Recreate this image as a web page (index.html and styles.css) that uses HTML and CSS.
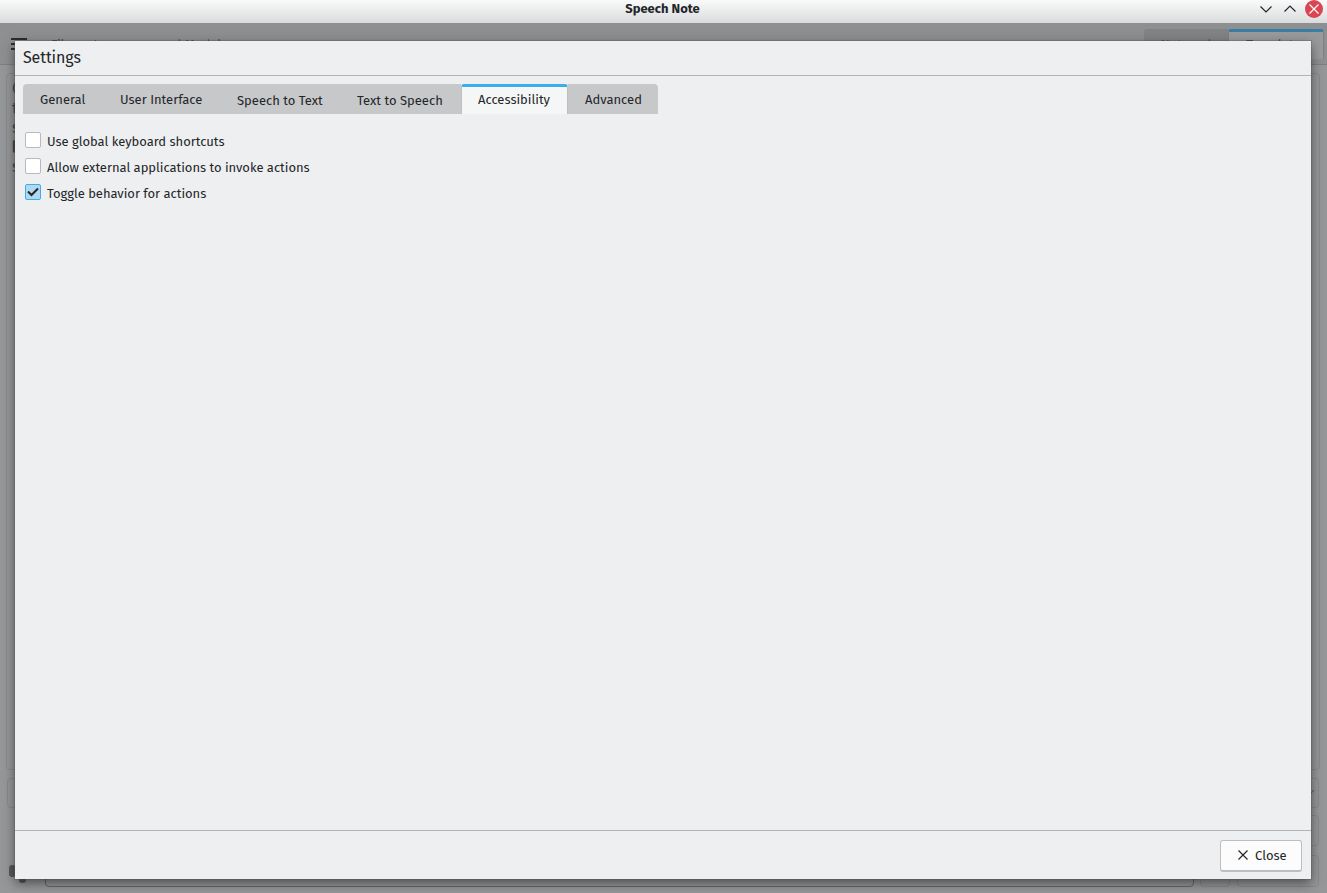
FILE: index.html
```html
<!DOCTYPE html>
<html lang="en">
<head>
  <meta charset="UTF-8">
  <title>Speech Note</title>
  <link rel="stylesheet" href="styles.css">
</head>
<body>
  <header class="titlebar">
    <h1>Speech Note</h1>
    <div class="window-buttons">
      <svg width="18" height="18" viewBox="0 0 18 18"><path d="M3.5 6.5 9 12l5.500-5.500"/></svg>
      <svg width="18" height="18" viewBox="0 0 18 18"><path d="M3.500 11.500 9 6l5.500 5.500"/></svg>
      <svg class="window-close" width="18" height="18" viewBox="0 0 18 18"><circle cx="9" cy="9" r="9"/><path d="M4.500 4.500l9 9M13.500 4.500l-9 9"/></svg>
    </div>
  </header>

  <div class="app">
    <nav class="toolbar">
      <span class="burger"></span>
      <span class="menu menu-file">File</span>
      <span class="menu">Languages and Models</span>
      <div class="view-tabs">
        <span class="view-tab">Notepad</span>
        <span class="view-tab current">Translator</span>
      </div>
    </nav>
    <div class="note">C<br>t<br>s<br><b>l</b><br>s</div>
    <div class="combo"><span>l</span><svg width="8" height="8" viewBox="0 0 8 8"><path d="M0 2l3 3 4-4"/></svg></div>
    <div class="row"><div class="box"></div></div>
    <div class="row row-bottom">
      <svg width="18" height="20" viewBox="0 0 18 20"><rect x="0" y="1" width="7" height="12" rx="3"/><rect x="10" y="6" width="7" height="13" rx="3"/></svg>
      <div class="progress"></div>
      <div class="box box-small"></div>
      <div class="box"></div>
    </div>
  </div>

  <main class="dialog">
    <h2>Settings</h2>
    <div class="content">
      <div class="tabs">
        <div class="tab general"><span>General</span></div>
        <div class="tab interface"><span>User Interface</span></div>
        <div class="tab stt"><span>Speech to Text</span></div>
        <div class="tab tts"><span>Text to Speech</span></div>
        <div class="tab accessibility active"><span>Accessibility</span></div>
        <div class="tab advanced"><span>Advanced</span></div>
      </div>
      <div class="options">
        <label class="option"><i class="check"></i><span>Use global keyboard shortcuts</span></label>
        <label class="option"><i class="check"></i><span>Allow external applications to invoke actions</span></label>
        <label class="option"><i class="check checked"><svg width="14" height="14" viewBox="0 0 14 14"><path d="M2 6.500 5.500 10 12 3.500"/></svg></i><span>Toggle behavior for actions</span></label>
      </div>
    </div>
    <footer>
      <button class="close"><svg width="12" height="12" viewBox="0 0 12 12"><path d="M1.500 1.500l9 9M10.500 1.500l-9 9"/></svg><span>Close</span></button>
    </footer>
  </main>
</body>
</html>
```

FILE: styles.css
```css
* {
  margin: 0;
  padding: 0;
  box-sizing: border-box;
}

body {
  height: 100vh;
  display: flex;
  flex-direction: column;
  position: relative;
  overflow: hidden;
  font: 13px/18px "Fira Sans", "Noto Sans", sans-serif;
  color: #232629;
  background: #969799;
  white-space: nowrap;
}

svg {
  display: block;
  fill: none;
  stroke: #232629;
  stroke-width: 1.2;
}

.titlebar {
  height: 23px;
  flex: none;
  position: relative;
  background: linear-gradient(#f9fbfa, #d9dbdd);
}

.titlebar h1 {
  font-size: 13px;
  line-height: 18px;
  text-align: center;
  padding-right: 2px;
}

.window-buttons {
  position: absolute;
  top: 0;
  right: 4px;
  display: flex;
  gap: 6px;
}

.window-close circle {
  fill: #da4453;
  stroke: none;
}

.window-close path {
  stroke: #fcfcfc;
}

/* dimmed main window */
.app {
  flex: 1;
  display: flex;
  flex-direction: column;
  color: #424446;
}

.toolbar {
  height: 42px;
  flex: none;
  display: flex;
  background: #8e8f90;
  border-bottom: 1px solid #7e7f80;
  padding: 6px 3px 0 11px;
}

.burger {
  width: 16px;
  height: 12px;
  margin: 9px 24px 0 0;
  border: solid #2b2d2f;
  border-width: 2px 0;
  background: linear-gradient(#2b2d2f, #2b2d2f) 0 3px / 100% 2px no-repeat;
}

.menu {
  margin-top: 7px;
}

.menu-file {
  margin-right: 22px;
}

.view-tabs {
  margin-left: auto;
  display: flex;
  height: 30px;
}

.view-tab {
  width: 84px;
  text-align: center;
  line-height: 31px;
  background: #828384;
  border-radius: 3px 0 0 0;
}

.view-tab.current {
  width: 96px;
  line-height: 26px;
  background: #989a9b;
  border: 1px solid #7e7f80;
  border-top: 3px solid #3b7da3;
  border-bottom: 0;
  border-radius: 3px 3px 0 0;
}

.note {
  height: 697px;
  margin: 8px 7px 0 6px;
  padding: 5px;
  border: 1px solid #88898b;
  border-radius: 4px;
  font-size: 16px;
  line-height: 19.5px;
}

.combo {
  height: 30px;
  margin: 8px 8px 0 7px;
  padding: 5px 3px 0 6px;
  display: flex;
  justify-content: space-between;
  border: 1px solid #88898b;
  border-radius: 4px;
}

.combo svg {
  margin-top: 5px;
  stroke: #6a6c6e;
}

.row {
  display: flex;
  justify-content: flex-end;
  height: 31px;
  margin: 7px 8px 0 9px;
}

.row-bottom {
  height: 32px;
  margin-top: 9px;
}

.row-bottom svg {
  margin-top: 9px;
  fill: #58595b;
  stroke: none;
}

.box,
.progress {
  width: 82px;
  border: 1px solid #88898b;
  border-radius: 4px;
}

.box-small {
  width: 30px;
  margin: 0 7px 0 6px;
}

.progress {
  flex: 1;
  margin-left: 18px;
  border-color: #68696b;
}

.dialog {
  position: absolute;
  left: 15px;
  top: 41px;
  width: 1296px;
  height: 838px;
  display: flex;
  flex-direction: column;
  background: #eeeff1;
  box-shadow: 0 0 0 1px rgba(80, 82, 84, 0.3), 0 4px 11px rgba(0, 0, 0, 0.5);
}

.dialog h2 {
  height: 35px;
  flex: none;
  padding-left: 8px;
  border-bottom: 1px solid #b1b3b5;
  font-size: 16px;
  font-weight: normal;
  line-height: 34px;
  letter-spacing: -0.1px;
}

.content {
  flex: 1;
  padding: 8px;
}

.tabs {
  display: flex;
  height: 30px;
}

.tab {
  padding-left: 17px;
  background: #c7c8ca;
  line-height: 32px;
}

.general { width: 80px; border-radius: 4px 0 0 0; }
.interface { width: 117px; }
.stt { width: 120px; line-height: 33px; }
.tts { width: 121px; line-height: 33px; }
.accessibility { width: 107px; }
.advanced { width: 90px; border-radius: 0 4px 0 0; }

.tab.active {
  padding-left: 16px;
  background: #f5f7f6;
  border: 1px solid #bfc0c2;
  border-top: 3px solid #3daee9;
  border-bottom: 0;
  border-radius: 3px 3px 0 0;
  line-height: 26px;
}

.options {
  padding: 18px 2px;
}

.option {
  display: flex;
  height: 26px;
}

.option span {
  margin-left: 6px;
  line-height: 20px;
  letter-spacing: -0.03px;
}

.check {
  width: 16px;
  height: 16px;
  background: #fff;
  border: 1px solid #b7b9bb;
  border-radius: 2px;
}

.check.checked {
  background: #b0d8ef;
  border-color: #3daee9;
}

.check svg {
  stroke-width: 2;
}

footer {
  height: 49px;
  flex: none;
  padding: 9px 9px 0;
  border-top: 1px solid #b1b3b5;
  display: flex;
  justify-content: flex-end;
}

.close {
  width: 82px;
  height: 32px;
  display: flex;
  align-items: center;
  padding-left: 16px;
  gap: 6px;
  background: #fcfcfc;
  border: 1px solid #bcbec0;
  border-bottom-width: 2px;
  border-radius: 3px;
  font: inherit;
  color: inherit;
}

.close svg {
  margin-bottom: 2px;
}
```
